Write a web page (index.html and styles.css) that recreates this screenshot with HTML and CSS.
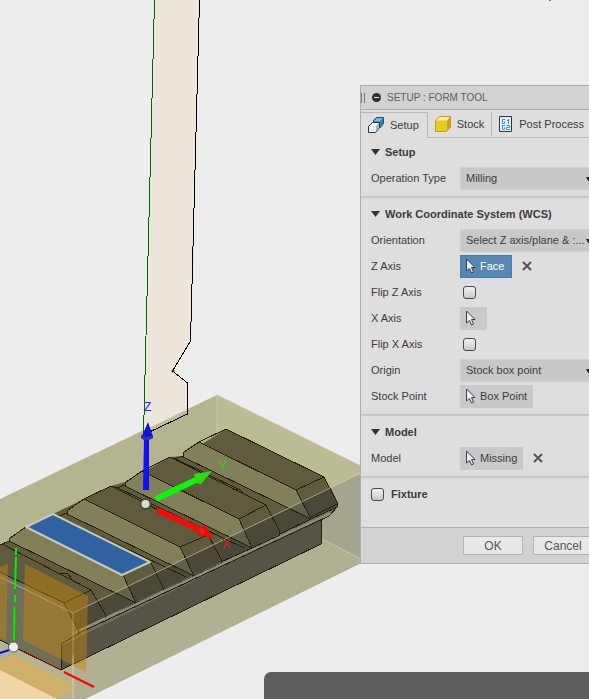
FILE: index.html
```html
<!DOCTYPE html>
<html lang="en">
<head>
<meta charset="utf-8">
<title>Setup : Form Tool</title>
<link rel="stylesheet" href="styles.css">
</head>
<body>
<main class="workspace">
  <svg class="scene" width="589" height="699" viewBox="0 0 589 699" role="img" aria-label="Model in stock box">
    <defs>
      <clipPath id="below"><path d="M361 473L73 613L0 577V699H361z"/></clipPath>
    </defs>
    <!-- stock box -->
    <path fill="#b4b491" d="M217 395L0 499V699H85L361 563V466z"/>
    <path fill="#bbbb94" d="M217 395L361 466V530L217 470z"/>
    <path fill="#a5a58f" d="M361 473L280 512L321 540L361 559z"/>
    <path fill="#b0b092" d="M321 540L361 559V563L85 699H73V660z"/>
    <path fill="none" stroke="#cacaa9" d="M217 395V431M322 539L361 559M217 395L361 466"/>
    <!-- form tool profile -->
    <path fill="#eee5db" d="M155 0H200L191 340L172 371L188 383V414L143 435z"/>
    <path fill="#b4b491" opacity=".8" d="M188 409V414L143 435V431z"/>
    <g fill="none" shape-rendering="crispEdges">
      <path stroke="#006c00" d="M154.500 0L143.500 435"/>
      <path stroke="#000" d="M199.500 0L190.500 341L172.500 371L187.500 383V414L143 435"/>
    </g>
    <circle cx="173" cy="371" r="1.500" fill="#222"/>
    <circle cx="550" cy="0" r="1" fill="#444"/>
    <!-- rail -->
    <path fill="#6f6e5f" d="M337 502L336 509L321 520L61 649V640z"/>
    <path fill="#575347" d="M321 518V544L61 670V646z"/>
    <!-- ridges -->
    <path fill="#605b3e" d="M226 429L324 477L337 502V507L78 630L64 603L0 572V545L9 541L53 514L111 486L125 482L170 457L183 456z"/>
    <path fill="#6f6e58" d="M0 572L64 603L78 630L62 643L61 670L0 640z"/>
    <g fill="#827f5b">
      <path d="M199 442L296 490L311 519L183 457L184 452z"/>
      <path d="M142 471L239 519L252 548L125 486L126 482z"/>
      <path d="M84 499L180 547L194 576L67 514L68 510z"/>
      <path d="M26 527L123 575L136 603L9 541L10 538z"/>
    </g>
    <path clip-path="url(#below)" fill="#222231" opacity=".34" d="M337 502V507L78 630L64 603L91 590L64 580L324 470z"/>
    <g fill="none" stroke="#25220c" shape-rendering="crispEdges">
      <path d="M183 457L184 452L199 442L226 429L324 477L337 502V507L311 519L296 490L324 477M199 442L296 490M183 457L311 519L280 534M311 517L337 504"/>
      <path d="M125 486L126 482L142 471L170 457L266 505L279 530L280 535L252 548L239 519L266 505M142 471L239 519M125 486L252 548L221 562M118 488L244 548M170 457L174 459L183 456M176 459L240 490"/>
      <path d="M67 514L68 510L84 499L111 486L208 535L221 559L222 563L194 576L180 547L208 535M84 499L180 547M67 514L194 576L163 591M60 517L186 577M111 486L117 488L125 485"/>
      <path d="M9 541L10 538L26 527L53 514L150 561L163 587L164 591L136 603L123 575L150 561M9 541L136 603L107 618M0 545L9 541M53 514L59 516L67 513M2 544L91 590L105 614L106 619L78 632M0 572L64 603L91 590M64 603L78 630L79 634L62 643L61 670L0 640"/>
      <path d="M337 507L329 516L79 633M321 519V544L61 670M233 490L239 489L244 494M59 574L67 573L72 579"/>
    </g>
    <path stroke="#8f8f7e" stroke-width="2" d="M331 513L79 631"/>
    <path fill="none" stroke="#d9d9c4" opacity=".6" d="M361 473L73 613L0 577M73 613V699"/>
    <!-- selected face -->
    <path fill="#2e62a1" stroke="#c6c6b9" stroke-width="2" stroke-linejoin="round" d="M53 514L150 562L122 575L26 527z"/>
    <!-- origin planes -->
    <g fill="#c8860a" opacity=".45">
      <path d="M25 564L88 596L86 672L23 640z"/>
      <path d="M8 564L6 641L0 638V567z"/>
    </g>
    <path fill="#d0b06a" d="M13 655L77 687L56 699H0V661z"/>
    <path fill="#f1d7a7" d="M0 670L57 699H0z"/>
    <path stroke="#d9d9c4" opacity=".5" d="M73 655V699"/>
    <g fill="none" stroke-width="2">
      <path stroke="#00f000" d="M16 548V555M16 557L15 589M15 595V602M14.500 607L14 640"/>
      <path stroke="#f00" d="M64 672L94 687"/>
      <path stroke="#a00000" stroke-width="1" d="M18 649L61 670"/>
      <path stroke="#00f" d="M0 653L9 650"/>
    </g>
    <circle cx="13.500" cy="647" r="5" fill="#ececec" stroke="#606058"/>
    <!-- axis triad -->
    <path fill="#1010f4" d="M144 438H149V490H143z"/>
    <path fill="#1010e4" d="M148 422L153 437L147 439L142 436z"/>
    <path fill="#2c2cb8" d="M141 435L147 437L153 435V438L149 440H144L141 438z"/>
    <path stroke="#0cf50c" stroke-width="6" stroke-linecap="round" d="M158 498L198 479"/>
    <path fill="#2bdc12" d="M194 474L212 471L201 484L196 483z"/>
    <path stroke="#f50c08" stroke-width="6" stroke-linecap="round" d="M159 511L200 530"/>
    <path fill="#fb0502" d="M204 525L214 538L197 535L198 529z"/>
    <circle cx="202" cy="531" r="3" fill="#d92a14"/>
    <circle cx="145.500" cy="504" r="5" fill="#dcdcd6" stroke="#4a483b" stroke-width="2"/>
    <g class="axis-name">
      <text x="144" y="411" fill="#2a2af4">Z</text>
      <text x="219" y="470" fill="#35cf20">Y</text>
      <text x="222" y="548" fill="#e81410">X</text>
    </g>
  </svg>

  <form class="panel" aria-label="Setup : Form Tool">
    <header class="panel-head">
      <span class="grip"></span>
      <button class="collapse" type="button" aria-label="Collapse"></button>
      <span class="panel-title">SETUP : FORM TOOL</span>
    </header>
    <nav class="tabs">
      <button class="tab tab-active" type="button">
        <svg width="16" height="16" viewBox="0 0 16 16"><path fill="#2c83b7" stroke="#174f74" d="M5.500 3.500L8.500.500H15.500V6.500L12.500 10.500H5.500z"/><path fill="#79bce0" d="M6 4L9 1H15L12 4z"/><path fill="#4a9fcf" d="M6 4H12V9H6z"/><path fill="#e9ebf0" stroke="#30343b" d="M.500 9.500L4.500 5.500H11.500V10.500L7.500 15.500H.500z"/><path fill="#fff" d="M2 9L5 6H11L8 9z"/><path fill="#aeb3bd" d="M8 9L11 6V10L8 14z"/></svg>
        Setup</button>
      <button class="tab" type="button">
        <svg width="16" height="16" viewBox="0 0 16 16"><path fill="#e5cc20" stroke="#c99710" d="M.500 4.500L4.500.500H15.500V11.500L11.500 15.500H.500z"/><path fill="#f7efa4" d="M1 4.500L5 1H15L11.500 4.500z"/><path fill="#d3a019" d="M12 4.500L15 1.500V11L12 15z"/></svg>
        Stock</button>
      <button class="tab" type="button">
        <svg width="14" height="16" viewBox="0 0 14 16"><path fill="#e9eef4" stroke="#30343b" d="M.500 .500H12.500V15.500H.500z"/><path fill="none" stroke="#2f91ea" d="M6 3.500H3.500V7.500H5.500V5.500M8 4.500H9.500V8M9.500 3V7M6 9.500H3.500V13.500H5.500V11.500M7.500 9.500H10.500V11.500H7.500V13.500H11"/></svg>
        Post Process</button>
    </nav>

    <section class="group">
      <h2 class="group-title"><span class="caret"></span>Setup</h2>
      <div class="row"><label for="op">Operation Type</label><select id="op"><option>Milling</option></select></div>
    </section>

    <section class="group">
      <h2 class="group-title"><span class="caret"></span>Work Coordinate System (WCS)</h2>
      <div class="row"><label for="orient">Orientation</label><select id="orient"><option>Select Z axis/plane &amp; :...</option></select></div>
      <div class="row"><label for="zaxis">Z Axis</label><button class="pick pick-on" id="zaxis" type="button"><svg class="cursor" width="11" height="16" viewBox="0 0 11 16"><path d="M1.500 1L10 9.500H6.500L8.500 14L6.500 15L4.500 10.500L1.500 13z"/></svg>Face</button><button class="clear" type="button" aria-label="Clear Z axis"><svg width="10" height="10" viewBox="0 0 10 10"><path d="M1 1L9 9M9 1L1 9"/></svg></button></div>
      <div class="row"><label for="flipz">Flip Z Axis</label><input class="inset" id="flipz" type="checkbox"></div>
      <div class="row"><label for="xaxis">X Axis</label><button class="pick pick-empty" id="xaxis" type="button"><svg class="cursor" width="11" height="16" viewBox="0 0 11 16"><path d="M1.500 1L10 9.500H6.500L8.500 14L6.500 15L4.500 10.500L1.500 13z"/></svg></button></div>
      <div class="row"><label for="flipx">Flip X Axis</label><input class="inset" id="flipx" type="checkbox"></div>
      <div class="row"><label for="origin">Origin</label><select id="origin"><option>Stock box point</option></select></div>
      <div class="row"><label for="point">Stock Point</label><button class="pick" id="point" type="button"><svg class="cursor" width="11" height="16" viewBox="0 0 11 16"><path d="M1.500 1L10 9.500H6.500L8.500 14L6.500 15L4.500 10.500L1.500 13z"/></svg>Box Point</button></div>
    </section>

    <section class="group">
      <h2 class="group-title"><span class="caret"></span>Model</h2>
      <div class="row"><label for="model">Model</label><button class="pick" id="model" type="button"><svg class="cursor" width="11" height="16" viewBox="0 0 11 16"><path d="M1.500 1L10 9.500H6.500L8.500 14L6.500 15L4.500 10.500L1.500 13z"/></svg>Missing</button><button class="clear" type="button" aria-label="Clear model"><svg width="10" height="10" viewBox="0 0 10 10"><path d="M1 1L9 9M9 1L1 9"/></svg></button></div>
    </section>

    <section class="group group-last">
      <div class="fixture"><input id="fixture" type="checkbox"><label for="fixture">Fixture</label></div>
    </section>

    <footer class="actions">
      <button class="action" type="button">OK</button>
      <button class="action" type="button">Cancel</button>
    </footer>
  </form>

  <div class="toast"></div>
</main>
</body>
</html>
```
FILE: styles.css
```css
* { box-sizing: border-box; }

body {
  margin: 0;
  background: #ededed;
  color: #3c3c3c;
  font: 11px/16px "Liberation Sans", Arial, sans-serif;
}

button, select, input { font: inherit; color: inherit; margin: 0; }
button { padding: 0; border: 0; background: none; }

.workspace {
  display: grid;
  grid-template-columns: 264px 96px minmax(0, 1fr);
  grid-template-rows: 85px max-content 1fr 27px;
  height: 100vh;
  overflow: hidden;
}

.scene { grid-area: 1 / 1 / -1 / -1; }
.axis-name { font-size: 12px; }

.toast {
  grid-area: 4 / 2 / 5 / 4;
  background: #5e5e5e;
  border-top-left-radius: 7px;
}

.panel {
  grid-area: 2 / 3;
  border: 1px solid #adadad;
  border-right: 0;
  background: #dedede;
}

.panel-head {
  display: flex;
  align-items: center;
  height: 24px;
  border-bottom: 1px solid #b0b0b0;
  background: #d2d2d2;
  color: #606060;
}
.panel-title { font-size: 10px; }
.grip { width: 4px; height: 10px; border: solid #777; border-width: 0 1px; }
.collapse {
  display: grid;
  place-items: center;
  width: 9px;
  height: 9px;
  margin: 0 6px 0 7px;
  border-radius: 50%;
  background: #2e2e2e;
}
.collapse::after { content: ""; width: 5px; height: 1px; background: #eee; }

.tabs { display: flex; height: 28px; padding-top: 2px; border-bottom: 1px solid #b8b8b8; }
.tab {
  display: flex;
  flex: none;
  align-items: center;
  gap: 6px;
  height: 24px;
  padding: 0 7px;
  border-right: 1px solid #b8b8b8;
}
.tab:last-child { padding-right: 0; border: 0; }
.tab-active { height: 26px; padding: 0 8px 2px 7px; border-top: 1px solid #b8b8b8; background: #dedede; }

.group { padding: 3px 0 5px 10px; border-bottom: 2px solid #c7c7c7; }
.group-last { padding-bottom: 20px; border: 0; }
.group-title {
  display: flex;
  align-items: center;
  gap: 5px;
  height: 26px;
  margin: 0;
  font-size: 11px;
  font-weight: bold;
}
.tabs + .group { padding-top: 1px; }
.caret { width: 9px; height: 6px; background: #333; clip-path: polygon(0 0, 100% 0, 50% 100%); }

.row { display: grid; grid-template-columns: 89px auto auto 1fr; align-items: center; height: 26px; }

select {
  grid-column: 2 / -1;
  appearance: none;
  height: 23px;
  padding: 0 0 0 5px;
  border: 1px solid #d0d0d0;
  border-right: 0;
  border-radius: 0;
  background: linear-gradient(#333, #333) no-repeat right 0 top 9px / 3px 1px,
              linear-gradient(#333, #333) no-repeat right 0 top 10px / 2px 2px,
              linear-gradient(#333, #333) no-repeat right 0 top 12px / 1px 1px, #c8c8c8;
}

.pick {
  display: flex;
  align-items: center;
  gap: 4px;
  height: 23px;
  padding: 0 6px 0 5px;
  background: #c9c9c9;
}
.pick-on { padding-right: 8px; background: #5788b3; color: #fff; outline: 1px solid #4b7daa; outline-offset: -1px; }
.pick-empty { padding-right: 11px; }
.cursor path { fill: #eceff4; stroke: #39404c; }
.clear { display: grid; place-items: center; width: 10px; height: 10px; margin-left: 10px; }
.clear path { fill: none; stroke: #555; stroke-width: 2; }

input[type="checkbox"] {
  appearance: none;
  width: 13px;
  height: 13px;
  border: 1px solid #4a4a4a;
  border-radius: 3px;
  background: linear-gradient(#f2f2f2, #c9c9c9);
}
.inset { margin-left: 3px; }

.fixture { display: flex; align-items: center; gap: 7px; height: 26px; font-weight: bold; }

.actions {
  display: flex;
  gap: 10px;
  height: 36px;
  padding: 8px 0 0 102px;
  border-top: 1px solid #b0b0b0;
  background: #d2d2d2;
}
.action {
  flex: none;
  width: 60px;
  height: 19px;
  border: 1px solid #b4b4b4;
  background: #e8e8e8;
  color: #555;
  font-size: 12px;
}
```
